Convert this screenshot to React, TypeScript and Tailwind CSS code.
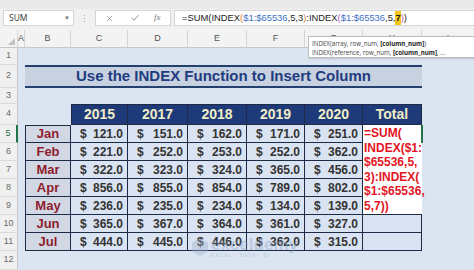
import { Check, X } from "lucide-react";

// sheet columns B..H, widths in px
const colW = ["w-[46px]", "w-[57px]", "w-[60px]", "w-[59px]", "w-[58px]", "w-[58px]", "w-[59px]"];
const letters = ["B", "C", "D", "E", "F", "G", "H"];
const years = ["2015", "2017", "2018", "2019", "2020"];

const data = [
  { month: "Jan", vals: ["121.0", "151.0", "162.0", "171.0", "251.0"] },
  { month: "Feb", vals: ["221.0", "252.0", "253.0", "252.0", "362.0"] },
  { month: "Mar", vals: ["322.0", "323.0", "324.0", "365.0", "456.0"] },
  { month: "Apr", vals: ["856.0", "855.0", "854.0", "789.0", "802.0"] },
  { month: "May", vals: ["236.0", "235.0", "234.0", "134.0", "139.0"] },
  { month: "Jun", vals: ["365.0", "367.0", "364.0", "361.0", "327.0"] },
  { month: "Jul", vals: ["444.0", "445.0", "446.0", "362.0", "315.0"] },
];

const line = "border-[#1d2b47]";

function RowHead({ n, active }: { n: number; active?: boolean }) {
  return (
    <div
      className={
        "flex w-[18px] shrink-0 items-center justify-center border-b border-[#dadada] bg-[#f0f0f0] text-[9px] " +
        (active ? "border-r-2 border-r-[#217346] text-[#217346]" : "border-r border-r-[#c8c8c8] text-[#6b6b6b]")
      }
    >
      {n}
    </div>
  );
}

function SheetRow({ n, h, active, children }: { n: number; h: string; active?: boolean; children?: React.ReactNode }) {
  return (
    <div className={"flex " + h}>
      <RowHead n={n} active={active} />
      <div className="w-[7px] shrink-0" />
      {children}
    </div>
  );
}

function FormulaBar() {
  return (
    <div className="flex h-[21px] items-start bg-[#f1f1f1] pt-[1px]">
      <div className="ml-[3px] flex h-[16px] w-[71px] items-center justify-between border border-[#d5d5d5] bg-white pl-[5px] pr-[3px] font-['Open_Sans',sans-serif] text-[8.5px] text-[#333]">
        <span>SUM</span>
        <span className="text-[6px] text-[#777]">▼</span>
      </div>
      <div className="ml-[10px] flex h-[16px] flex-col justify-center gap-[2px]">
        <span className="block h-[1px] w-[1px] bg-[#aaa]" />
        <span className="block h-[1px] w-[1px] bg-[#aaa]" />
        <span className="block h-[1px] w-[1px] bg-[#aaa]" />
      </div>
      <div className="ml-[10px] flex h-[16px] w-[76px] items-center border border-[#d5d5d5] bg-white text-[#767676]">
        <X className="ml-[9px] h-[9px] w-[9px]" strokeWidth={1.6} />
        <Check className="ml-[16px] h-[10px] w-[10px]" strokeWidth={2} />
        <span className="ml-[14px] font-['Liberation_Serif',serif] text-[9px] italic">fx</span>
      </div>
      <div className="ml-[3px] flex h-[16px] flex-1 items-center border border-r-0 border-[#d5d5d5] bg-white pl-[7px] text-[9.4px] text-[#222]">
        <span>=SUM(INDEX</span>
        <span className="text-[#d9822b]">(</span>
        <span className="text-[#3b6fc4]">$1:$65536</span>
        <span>,5,3</span>
        <span className="text-[#d9822b]">)</span>
        <span>:INDEX</span>
        <span className="text-[#b05ac0]">(</span>
        <span className="text-[#3b6fc4]">$1:$65536</span>
        <span>,5,</span>
        <span className="bg-[#f5c518] font-bold">7</span>
        <span className="text-[#b05ac0]">)</span>
        <span>)</span>
      </div>
    </div>
  );
}

function ColumnHeaders() {
  return (
    <div className="flex h-[18px] border-b border-[#c8c8c8] bg-[#f3f3f3] text-[9px] text-[#555]">
      <div className="relative w-[18px] shrink-0 border-r border-[#d4d4d4]">
        <svg className="absolute bottom-[2px] right-[2px]" width="7" height="7" viewBox="0 0 7 7">
          <polygon points="7,0 7,7 0,7" fill="#c3c3c3" />
        </svg>
      </div>
      <div className="flex w-[7px] shrink-0 items-center justify-center border-r border-[#d4d4d4]">A</div>
      {letters.map((l, i) => (
        <div key={l} className={colW[i] + " flex shrink-0 items-center justify-center border-r border-[#d4d4d4]"}>
          {l}
        </div>
      ))}
      <div className="flex flex-1 items-center justify-center">I</div>
    </div>
  );
}

export default function App() {
  return (
    <div className="relative h-[270px] w-[474px] overflow-hidden bg-[#dbe4f1] font-['Liberation_Sans',Arial,sans-serif]">
      <div className="h-[9px] bg-[#e9e9e9]" />
      <FormulaBar />
      <ColumnHeaders />

      <SheetRow n={1} h="h-[17px]" />
      <SheetRow n={2} h="h-[23px]">
        <div className="flex w-[397px] shrink-0 items-center justify-center border-y-2 border-[#24406e] bg-[#c7d1df] text-[15px] font-bold text-[#1f3c80]">
          Use the INDEX Function to Insert Column
        </div>
      </SheetRow>
      <SheetRow n={3} h="h-[16px]" />
      <SheetRow n={4} h="h-[21px]">
        <div className="w-[46px] shrink-0" />
        {[...years, "Total"].map((y, i) => (
          <div
            key={y}
            className={
              colW[i + 1] +
              " flex shrink-0 items-center justify-center border-t border-r border-b bg-[#1f3a78] text-[14px] font-bold text-[#efedc6] " +
              line +
              (i === 0 ? " border-l" : "")
            }
          >
            {y}
          </div>
        ))}
      </SheetRow>
      {data.map((r, ri) => (
        <SheetRow key={r.month} n={ri + 5} h="h-[18px]" active={ri === 0}>
          <div
            className={
              "flex w-[46px] shrink-0 items-center justify-center border-x border-b bg-[#d1d8e4] text-[13px] font-bold text-[#8f1c2e] " +
              line +
              (ri === 0 ? " border-t" : "")
            }
          >
            {r.month}
          </div>
          {r.vals.map((v, i) => (
            <div
              key={i}
              className={colW[i + 1] + " flex shrink-0 items-center justify-between border-r border-b bg-[#dae3f1] pl-[9px] pr-[4px] text-[12px] font-bold text-[#333] " + line}
            >
              <span>$</span>
              <span>{v}</span>
            </div>
          ))}
          <div className={"w-[59px] shrink-0 border-r border-b bg-[#dae3f1] " + line} />
        </SheetRow>
      ))}
      <SheetRow n={12} h="h-[19px]" />

      {/* cell H5 in edit mode, text spilling down */}
      <div className="absolute left-[363px] top-[125px] h-[89px] w-[59px] bg-white pl-[1px] pt-[1px] text-[12px] font-bold leading-[14.6px] text-[#e3151f]">
        <div className="absolute right-[-1px] top-0 h-[18px] w-[2px] bg-[#217346]" />
        <div>=SUM(</div>
        <div>INDEX($1:</div>
        <div>$65536,5,</div>
        <div>3):INDEX(</div>
        <div>$1:$65536,</div>
        <div>5,7))</div>
      </div>

      {/* function tooltip */}
      <div className="absolute left-[308px] top-[36px] h-[22px] w-[170px] border border-[#bcbcbc] bg-white pl-[3px] pt-[2px] font-['Open_Sans',sans-serif] text-[6.2px] leading-[9px] text-[#444] shadow-[1px_1px_2px_rgba(0,0,0,0.15)]">
        <div className="whitespace-nowrap">
          INDEX(array, row_num, <span className="font-bold text-[#222]">[column_num]</span>)
        </div>
        <div className="whitespace-nowrap">
          INDEX(reference, row_num, <span className="font-bold text-[#222]">[column_num]</span>, ...
        </div>
      </div>

      {/* watermark */}
      <div className="pointer-events-none absolute left-[192px] top-[236px] flex items-center gap-[3px] opacity-40">
        <svg width="16" height="18" viewBox="0 0 16 18">
          <polygon points="8,0 16,4.5 16,13.5 8,18 0,13.5 0,4.5" fill="#9fb3d0" />
        </svg>
        <div className="flex flex-col leading-none">
          <span className="text-[17px] font-bold text-[#8ea6c8]">exceldemy</span>
          <span className="text-[5px] tracking-[1px] text-[#8ea6c8]">EXCEL · DATA · BI</span>
        </div>
      </div>
    </div>
  );
}
